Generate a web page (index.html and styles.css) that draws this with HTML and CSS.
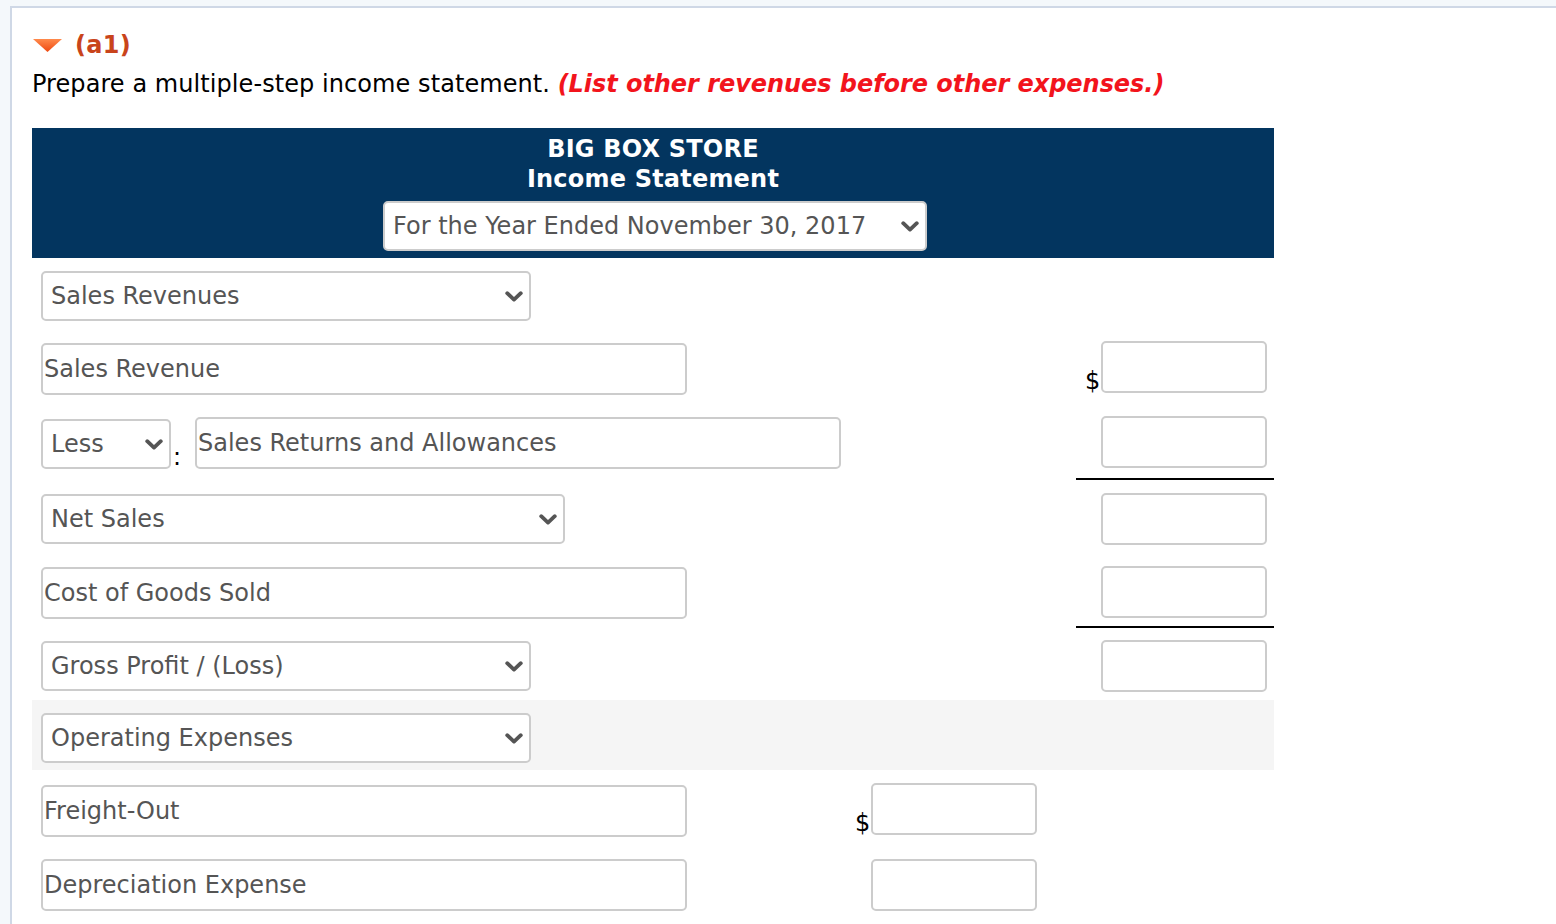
FILE: index.html
```html
<!DOCTYPE html>
<html lang="en">
<head>
<meta charset="utf-8">
<title>Income Statement</title>
<link rel="stylesheet" href="styles.css">
</head>
<body>
<div class="frame">
  <div class="part-head">
    <svg class="tri" viewBox="0 0 29 13" width="29" height="13">
      <defs>
        <linearGradient id="tg" x1="0" y1="0" x2="0" y2="1">
          <stop offset="0" stop-color="#ff8a4c"/>
          <stop offset="1" stop-color="#ee4810"/>
        </linearGradient>
      </defs>
      <polygon points="0,0 29,0 14.5,13" fill="url(#tg)"/>
    </svg>
    <span class="part-label">(a1)</span>
  </div>
  <p class="prompt">Prepare a multiple-step income statement. <em class="hint">(List other revenues before other expenses.)</em></p>

  <div class="statement">
    <div class="st-head">
      <div class="st-title">BIG BOX STORE</div>
      <div class="st-title">Income Statement</div>
      <div class="select date"><span>For the Year Ended November 30, 2017</span><svg class="chev" viewBox="0 0 18 11" width="18" height="11"><path d="M2.2 2.2 L9 8.6 L15.8 2.2" fill="none" stroke="#555" stroke-width="3.8" stroke-linecap="round" stroke-linejoin="round"/></svg></div>
    </div>

    <div class="row h74 first">
      <div class="lbl"><div class="select w490"><span>Sales Revenues</span><svg class="chev" viewBox="0 0 18 11" width="18" height="11"><path d="M2.2 2.2 L9 8.6 L15.8 2.2" fill="none" stroke="#555" stroke-width="3.8" stroke-linecap="round" stroke-linejoin="round"/></svg></div></div>
      <div class="amt"></div>
      <div class="amt"></div>
    </div>

    <div class="row h74">
      <div class="lbl"><div class="field">Sales Revenue</div></div>
      <div class="amt"></div>
      <div class="amt"><div class="amt-in lift"><span class="cur">$</span><div class="box"></div></div></div>
    </div>

    <div class="row h74">
      <div class="lbl">
        <div class="combo">
          <div class="select w130"><span>Less</span><svg class="chev" viewBox="0 0 18 11" width="18" height="11"><path d="M2.2 2.2 L9 8.6 L15.8 2.2" fill="none" stroke="#555" stroke-width="3.8" stroke-linecap="round" stroke-linejoin="round"/></svg></div>
          <span class="colon">:</span>
          <div class="field">Sales Returns and Allowances</div>
        </div>
      </div>
      <div class="amt"></div>
      <div class="amt rule"><div class="amt-in"><span class="cur"></span><div class="box"></div></div></div>
    </div>

    <div class="row h78">
      <div class="lbl"><div class="select w524"><span>Net Sales</span><svg class="chev" viewBox="0 0 18 11" width="18" height="11"><path d="M2.2 2.2 L9 8.6 L15.8 2.2" fill="none" stroke="#555" stroke-width="3.8" stroke-linecap="round" stroke-linejoin="round"/></svg></div></div>
      <div class="amt"></div>
      <div class="amt"><div class="amt-in"><span class="cur"></span><div class="box"></div></div></div>
    </div>

    <div class="row h70">
      <div class="lbl"><div class="field">Cost of Goods Sold</div></div>
      <div class="amt"></div>
      <div class="amt rule"><div class="amt-in"><span class="cur"></span><div class="box"></div></div></div>
    </div>

    <div class="row h72 drop">
      <div class="lbl"><div class="select w490"><span>Gross Profit / (Loss)</span><svg class="chev" viewBox="0 0 18 11" width="18" height="11"><path d="M2.2 2.2 L9 8.6 L15.8 2.2" fill="none" stroke="#555" stroke-width="3.8" stroke-linecap="round" stroke-linejoin="round"/></svg></div></div>
      <div class="amt"></div>
      <div class="amt"><div class="amt-in"><span class="cur"></span><div class="box"></div></div></div>
    </div>

    <div class="row h70 shaded">
      <div class="lbl"><div class="select w490"><span>Operating Expenses</span><svg class="chev" viewBox="0 0 18 11" width="18" height="11"><path d="M2.2 2.2 L9 8.6 L15.8 2.2" fill="none" stroke="#555" stroke-width="3.8" stroke-linecap="round" stroke-linejoin="round"/></svg></div></div>
      <div class="amt"></div>
      <div class="amt"></div>
    </div>

    <div class="row h78 drop">
      <div class="lbl"><div class="field">Freight-Out</div></div>
      <div class="amt"><div class="amt-in lift"><span class="cur">$</span><div class="box"></div></div></div>
      <div class="amt"></div>
    </div>

    <div class="row h74">
      <div class="lbl"><div class="field">Depreciation Expense</div></div>
      <div class="amt"><div class="amt-in"><span class="cur"></span><div class="box"></div></div></div>
      <div class="amt"></div>
    </div>
  </div>
</div>
</body>
</html>
```

FILE: styles.css
```css
html, body {
  margin: 0;
  padding: 0;
  overflow: hidden;
}

body {
  background: #f4f8fb;
  font-family: "DejaVu Sans", Verdana, sans-serif;
  font-size: 24px;
  color: #000;
}

.frame {
  margin: 6px 0 0 10px;
  border-top: 2px solid #cfd8e6;
  border-left: 2px solid #cfd8e6;
  background: #fff;
  min-height: 918px;
  box-sizing: border-box;
  padding: 16px 0 0 20px;
}

.part-head {
  display: flex;
  align-items: center;
  height: 40px;
  padding-top: 1px;
}

.tri {
  display: block;
  margin: 1px 13px 0 1px;
}

.part-label {
  font-weight: bold;
  color: #c9441b;
  letter-spacing: 0.3px;
}

.prompt {
  margin: -1px 0 24px 0;
  line-height: 40px;
  letter-spacing: 0.07px;
}

.hint {
  color: #f2141c;
  font-weight: bold;
  font-style: italic;
  letter-spacing: -0.05px;
}

.statement {
  width: 1242px;
}

.st-head {
  background: #03355f;
  color: #fff;
  text-align: center;
  padding: 6px 0 7px;
}

.st-title {
  font-weight: bold;
  line-height: 30px;
  letter-spacing: 0.2px;
}

.select {
  display: flex;
  align-items: center;
  justify-content: space-between;
  height: 50px;
  border: 2px solid #cccccc;
  border-radius: 5px;
  box-sizing: border-box;
  padding: 0 6px 0 8px;
  color: #555;
  background: #fff;
  text-align: left;
}

.chev {
  display: block;
  flex: none;
}

.st-head .date {
  width: 544px;
  margin: 7px 0 0 351px;
}

.w490 { width: 490px; }
.w524 { width: 524px; }
.w130 { width: 130px; }

.field {
  width: 646px;
  height: 52px;
  border: 2px solid #cccccc;
  border-radius: 5px;
  box-sizing: border-box;
  padding-left: 1px;
  display: flex;
  align-items: center;
  color: #555;
  background: #fff;
}

.box {
  width: 166px;
  height: 52px;
  border: 2px solid #cccccc;
  border-radius: 5px;
  box-sizing: border-box;
  background: #fff;
}

.row {
  display: grid;
  grid-template-columns: 1fr 230px 198px;
  padding-left: 9px;
  box-sizing: border-box;
}

.h70 { height: 70px; }
.h72 { height: 72px; }
.h74 { height: 74px; }
.h78 { height: 78px; }

.row.first {
  padding-top: 2px;
}

.row.drop {
  padding-top: 4px;
}

.row.shaded {
  background: #f5f5f5;
  padding-top: 6px;
}

.lbl {
  display: flex;
  align-items: center;
}

.combo {
  display: flex;
  align-items: flex-end;
}

.colon {
  line-height: 24px;
  width: 8px;
  margin: 0 14px 0 2px;
  color: #000;
}

.amt {
  display: flex;
  align-items: center;
  padding-left: 9px;
  box-sizing: border-box;
}

.amt-in {
  display: flex;
  align-items: flex-end;
}

.amt-in.lift {
  margin-bottom: 4px;
}

.cur {
  width: 16px;
  line-height: 24px;
  color: #000;
}

.rule {
  border-bottom: 2px solid #000;
}
```
